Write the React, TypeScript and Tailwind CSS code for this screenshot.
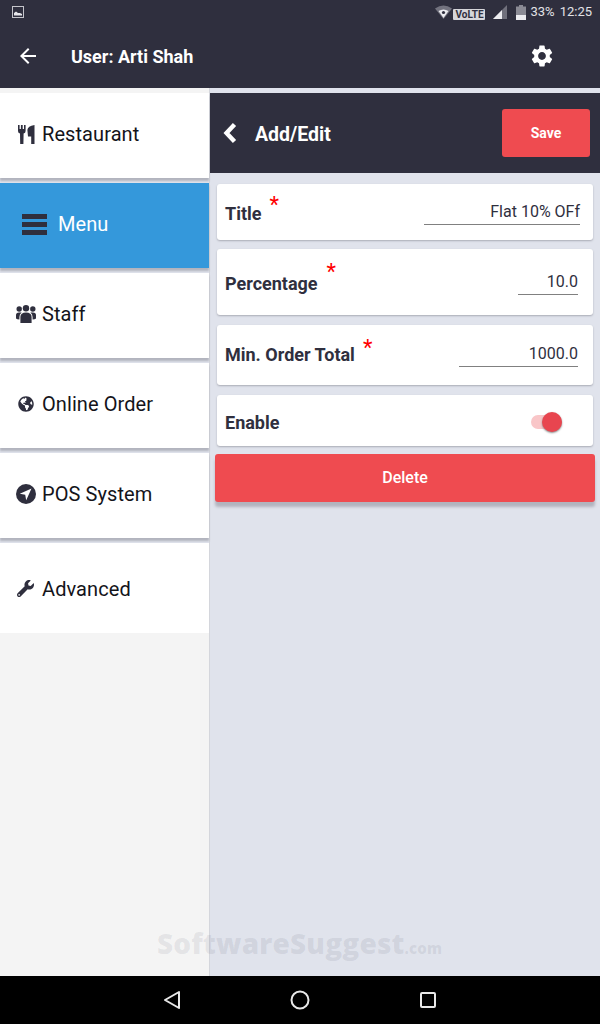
import React from 'react';
import { FaGlobeAmericas, FaWrench } from 'react-icons/fa';
import { MdArrowBack, MdSettings } from 'react-icons/md';

const font = { fontFamily: 'Roboto, sans-serif' };
const dark = '#2f2f3e';

function CutleryIcon() {
  return (
    <svg width="17" height="19" viewBox="0 0 17 19" fill={dark}>
      <path d="M0 0 H1.6 V4 H2.9 V0 H4.7 V4 H6 V0 H7.6 V6 Q7.6 8 5.6 8.6 L5.4 19 H2.2 L2 8.6 Q0 8 0 6 Z" />
      <path d="M16.5 0 V19 H13.2 V11.5 H10 L9.4 5 Q9.6 1 16.5 0 Z" />
    </svg>
  );
}

function UsersIcon() {
  return (
    <svg width="20" height="18" viewBox="0 0 20 18" fill={dark}>
      <circle cx="3.2" cy="4" r="2.7" />
      <circle cx="10" cy="3.2" r="3.2" />
      <circle cx="16.8" cy="4" r="2.7" />
      <path d="M4.4 18 V12 Q4.4 7.4 10 7.4 Q15.6 7.4 15.6 12 V18 Q10 19 4.4 18 Z" />
      <path d="M0 13.5 V10 Q0 7.4 3 7.4 L5.6 7.4 Q3.4 9 3.4 12 V14.6 Q1 14.6 0 13.5 Z" />
      <path d="M20 13.5 V10 Q20 7.4 17 7.4 L14.4 7.4 Q16.6 9 16.6 12 V14.6 Q19 14.6 20 13.5 Z" />
    </svg>
  );
}

function NavIcon() {
  return (
    <svg width="20" height="20" viewBox="0 0 20 20">
      <circle cx="10" cy="10" r="10" fill={dark} />
      <path d="M15.5 4.5 L3.8 9.8 L9.2 10.8 L10.2 16.2 Z" fill="#fff" />
    </svg>
  );
}

function SideItem({ icon, label, h, active, last }: { icon: React.ReactNode; label: string; h: string; active?: boolean; last?: boolean }) {
  return (
    <div className={`${h} flex items-center ${active ? 'bg-[#3498db] text-white' : 'bg-white text-[#14141a]'} ${last ? 'pt-[1px]' : 'pb-[3px] mb-[5px] shadow-[0_3px_2px_#b2b4be]'}`}>
      {icon}
      <span className="text-[20px] leading-none tracking-[0.08px]">{label}</span>
    </div>
  );
}

function Row({ h, mb, label, labelTop, starClass, value, line, pr, pt }: { h: string; mb: string; label: string; labelTop: string; starClass: string; value: string; line: string; pr: string; pt: string }) {
  return (
    <div className={`${h} ${mb} ${pr} ${pt} mx-[7px] bg-white rounded-[3px] shadow-[0_1px_2px_#a9abb5] flex justify-between pl-2`}>
      <div className="flex items-start">
        <span className={`text-[18px] font-bold text-[#2f2f3e] leading-[22px] ${labelTop}`}>{label}</span>
        <span className={`text-[#f00] text-[22px] leading-none ${starClass}`}>*</span>
      </div>
      <div className={`${line} h-[28px] pt-[3px] border-b border-[#808080] text-right text-[16px] leading-[24px] text-[#2f2f3e]`}>{value}</div>
    </div>
  );
}

export default function App() {
  return (
    <div className="relative w-[600px] h-[1024px] overflow-hidden flex flex-col bg-[#e0e3ec]" style={font}>
      <div className="h-[88px] bg-[#2f2f3e] text-white shrink-0">
        <div className="h-[24px] flex items-center pl-[12px] pr-[8px] text-[#e2e2e6]">
          <svg width="12" height="12" viewBox="0 0 12 12">
            <rect x="0.5" y="0.5" width="11" height="11" fill="none" stroke="#c4c4ca" strokeWidth="1" />
            <path d="M2 9.5 L2 7 L4 5.5 L6 7 L8 7 L10 8 L10 9.5 Z" fill="#e8e8ec" />
          </svg>
          <div className="ml-auto flex items-center">
            <svg width="17" height="14" viewBox="0 0 17 14">
              <path d="M0 3.5 Q8.5 -2.5 17 3.5 L8.5 14 Z" fill="#73737f" />
              <path d="M3.5 6 Q8.5 3 13.5 6 L8.5 13 Z" fill="#ececf0" />
              <circle cx="8.5" cy="7.5" r="1.6" fill="#2f2f3e" />
            </svg>
            <span className="ml-[1px] mt-[5px] bg-[#d6d6da] text-[#2f2f3e] text-[10px] font-bold rounded-[1px] h-[11px] leading-[11px] w-[32px] text-center">VoLTE</span>
            <svg width="14" height="14" viewBox="0 0 14 14" className="ml-[8px]">
              <path d="M0 14 L14 0 L14 14 Z" fill="#70707c" />
              <path d="M0 14 L9 5 L9 14 Z" fill="#ececf0" />
            </svg>
            <svg width="10" height="15" viewBox="0 0 10 15" className="ml-[9px]">
              <rect x="3" y="0" width="4" height="2" fill="#8a8a94" />
              <rect x="0" y="1.5" width="10" height="13.5" fill="#8a8a94" />
              <rect x="0" y="10" width="10" height="5" fill="#ececf0" />
            </svg>
            <span className="text-[13px] ml-[4px]">33%</span>
            <span className="text-[13px] ml-[5px]">12:25</span>
          </div>
        </div>
        <div className="h-[64px] flex items-center">
          <MdArrowBack className="ml-[16px] text-[24px]" />
          <span className="ml-[31px] text-[18px] font-bold">User: Arti Shah</span>
          <MdSettings className="ml-auto mr-[45px] text-[26px]" />
        </div>
      </div>

      <div className="flex-1 flex min-h-0">
        <div className="w-[210px] shrink-0 bg-[#f4f4f4] border-r border-[#d4d6dc] pt-[5px]">
          <div className="bg-[#e0e3ec]">
            <SideItem h="h-[85px]" label="Restaurant" icon={<span className="ml-[18px] mr-[7px] flex"><CutleryIcon /></span>} />
            <SideItem h="h-[85px]" active label="Menu" icon={
              <span className="ml-[22px] mr-[11px] w-[25px] h-[21px] flex flex-col justify-between">
                <i className="h-[5px] bg-[#2f2f3e] block" />
                <i className="h-[5px] bg-[#2f2f3e] block" />
                <i className="h-[5px] bg-[#2f2f3e] block" />
              </span>
            } />
            <SideItem h="h-[85px]" label="Staff" icon={<span className="ml-[16px] mr-[6px] flex"><UsersIcon /></span>} />
            <SideItem h="h-[85px]" label="Online Order" icon={<FaGlobeAmericas className="ml-[18px] mr-[8px] text-[16px] text-[#2f2f3e]" />} />
            <SideItem h="h-[85px]" label="POS System" icon={<span className="ml-[16px] mr-[6px] flex"><NavIcon /></span>} />
            <SideItem h="h-[90px]" last label="Advanced" icon={<FaWrench className="ml-[17px] mr-[8px] text-[17px] text-[#2f2f3e]" />} />
          </div>
        </div>

        <div className="flex-1 pt-[5px]">
          <div className="h-[80px] bg-[#2f2f3e] text-white flex items-center mb-[11px]">
            <svg width="16" height="22" viewBox="0 0 16 22" className="ml-[12px]">
              <path d="M12.5 2.5 L4.5 11 L12.5 19.5" fill="none" stroke="#fff" strokeWidth="4.4" />
            </svg>
            <span className="ml-[17px] mt-[3px] text-[19.5px] font-bold">Add/Edit</span>
            <button className="ml-auto mr-[10px] w-[88px] h-[48px] rounded-[3px] bg-[#ef4b50] text-white text-[14px] font-bold">Save</button>
          </div>
          <Row h="h-[56px]" mb="mb-[9px]" pt="pt-[13px]" pr="pr-[13px]" label="Title" labelTop="mt-[6px]" starClass="ml-[8px] mt-[-3px]" value="Flat 10% OFf" line="w-[156px]" />
          <Row h="h-[66px]" mb="mb-[10px]" pt="pt-[18px]" pr="pr-[15px]" label="Percentage" labelTop="mt-[6px]" starClass="ml-[9px] mt-[-6px]" value="10.0" line="w-[60px]" />
          <Row h="h-[60px]" mb="mb-[10px]" pt="pt-[14px]" pr="pr-[15px]" label="Min. Order Total" labelTop="mt-[5px]" starClass="ml-[8px] mt-[-2px]" value="1000.0" line="w-[119px]" />
          <div className="h-[51px] mx-[7px] mb-[8px] pt-[3px] bg-white rounded-[3px] shadow-[0_1px_2px_#a9abb5] flex items-center justify-between pl-2 pr-[31px]">
            <span className="text-[18px] font-bold text-[#2f2f3e]">Enable</span>
            <div className="relative w-[31px] h-[14px] rounded-full bg-[#f9c6c8]">
              <div className="absolute right-0 top-[-3px] w-[20px] h-[20px] rounded-full bg-[#e8454f] shadow-[0_1px_2px_#888]" />
            </div>
          </div>
          <button className="block mx-[5px] w-[380px] h-[48px] rounded-[3px] bg-[#ef4b50] text-white text-[16px] font-medium shadow-[0_5px_3px_#b2b4be]">Delete</button>
        </div>
      </div>

      <div className="h-[48px] bg-black shrink-0 flex items-center justify-center gap-[109px]">
        <svg width="18" height="20" viewBox="0 0 18 20"><path d="M16 2 L2 10 L16 18 Z" fill="none" stroke="#e8e8e8" strokeWidth="2" strokeLinejoin="round" /></svg>
        <svg width="20" height="20" viewBox="0 0 20 20"><circle cx="10" cy="10" r="8.5" fill="none" stroke="#e8e8e8" strokeWidth="2" /></svg>
        <svg width="18" height="18" viewBox="0 0 18 18"><rect x="2" y="2" width="14" height="14" rx="1" fill="none" stroke="#e8e8e8" strokeWidth="2" /></svg>
      </div>

      <div className="absolute left-[157px] top-[924px] text-[#4a4a60]/10 font-extrabold text-[28px] leading-[38px] tracking-[0.15px]" style={{ fontFamily: '"Open Sans", sans-serif' }}>
        SoftwareSuggest<span className="text-[15px]">.com</span>
      </div>
    </div>
  );
}
